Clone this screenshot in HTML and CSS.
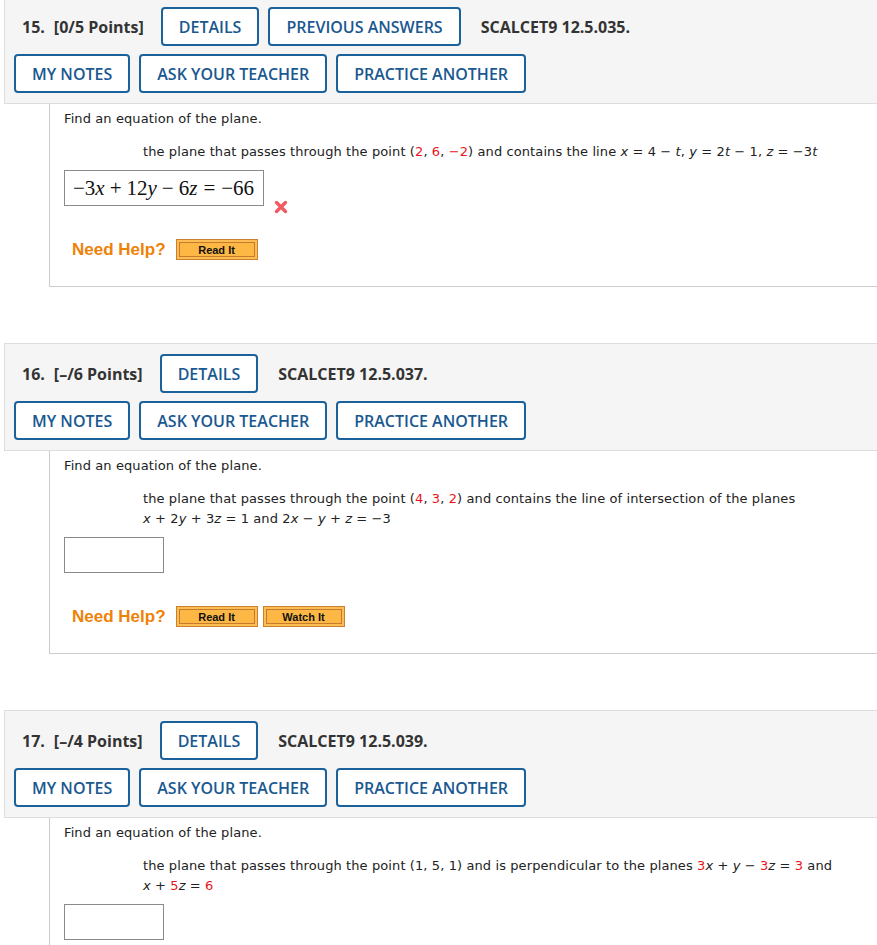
FILE: index.html
```html
<!DOCTYPE html>
<html lang="en">
<head>
<meta charset="utf-8">
<title>Questions</title>
<link rel="stylesheet" href="styles.css">
</head>
<body>
<div class="page">

  <section class="question">
    <div class="qhead">
      <div class="qrow">
        <span class="qlabel"><span class="qnum">15.</span><span class="qpts">[0/5 Points]</span></span>
        <button class="btn">DETAILS</button>
        <button class="btn">PREVIOUS ANSWERS</button>
        <span class="qref">SCALCET9 12.5.035.</span>
      </div>
      <div class="qrow">
        <button class="btn">MY NOTES</button>
        <button class="btn">ASK YOUR TEACHER</button>
        <button class="btn">PRACTICE ANOTHER</button>
      </div>
    </div>
    <div class="qbody">
      <p class="prompt">Find an equation of the plane.</p>
      <p class="stmt">the plane that passes through the point (<span class="red">2</span>, <span class="red">6</span>, <span class="red">&minus;2</span>) and contains the line <i>x</i> = 4 &minus; <i>t</i>, <i>y</i> = 2<i>t</i> &minus; 1, <i>z</i> = &minus;3<i>t</i></p>
      <div class="answer-row">
        <div class="answer wide"><span class="math">&minus;3<i>x</i><span class="op">+</span>12<i>y</i><span class="op">&minus;</span>6<i>z</i><span class="rel">=</span>&minus;66</span></div>
        <svg class="wrong" width="14" height="14" viewBox="0 0 14 14"><path d="M2.5 2.5 L11.5 11.5 M11.5 2.5 L2.5 11.5" stroke="#f25a5f" stroke-width="3.4" stroke-linecap="round" fill="none"/></svg>
      </div>
      <div class="help">
        <span class="help-label">Need Help?</span>
        <button class="help-btn">Read It</button>
      </div>
    </div>
  </section>

  <section class="question">
    <div class="qhead">
      <div class="qrow">
        <span class="qlabel"><span class="qnum">16.</span><span class="qpts">[&ndash;/6 Points]</span></span>
        <button class="btn">DETAILS</button>
        <span class="qref">SCALCET9 12.5.037.</span>
      </div>
      <div class="qrow">
        <button class="btn">MY NOTES</button>
        <button class="btn">ASK YOUR TEACHER</button>
        <button class="btn">PRACTICE ANOTHER</button>
      </div>
    </div>
    <div class="qbody">
      <p class="prompt">Find an equation of the plane.</p>
      <p class="stmt">the plane that passes through the point (<span class="red">4</span>, <span class="red">3</span>, <span class="red">2</span>) and contains the line of intersection of the planes <span class="eq"><i>x</i> + 2<i>y</i> + 3<i>z</i> = 1</span> and <span class="eq">2<i>x</i> &minus; <i>y</i> + <i>z</i> = &minus;3</span></p>
      <div class="answer-row">
        <div class="answer"></div>
      </div>
      <div class="help">
        <span class="help-label">Need Help?</span>
        <button class="help-btn">Read It</button>
        <button class="help-btn">Watch It</button>
      </div>
    </div>
  </section>

  <section class="question">
    <div class="qhead">
      <div class="qrow">
        <span class="qlabel"><span class="qnum">17.</span><span class="qpts">[&ndash;/4 Points]</span></span>
        <button class="btn">DETAILS</button>
        <span class="qref">SCALCET9 12.5.039.</span>
      </div>
      <div class="qrow">
        <button class="btn">MY NOTES</button>
        <button class="btn">ASK YOUR TEACHER</button>
        <button class="btn">PRACTICE ANOTHER</button>
      </div>
    </div>
    <div class="qbody">
      <p class="prompt">Find an equation of the plane.</p>
      <p class="stmt">the plane that passes through the point (1, 5, 1) and is perpendicular to the planes <span class="eq"><span class="red">3</span><i>x</i> + <i>y</i> &minus; <span class="red">3</span><i>z</i> = <span class="red">3</span></span> and <span class="eq"><i>x</i> + <span class="red">5</span><i>z</i> = <span class="red">6</span></span></p>
      <div class="answer-row">
        <div class="answer"></div>
      </div>
    </div>
  </section>

</div>
</body>
</html>
```

FILE: styles.css
```css
html, body {
  margin: 0;
  padding: 0;
  background: #ffffff;
}

body {
  font-family: "DejaVu Sans", Verdana, sans-serif;
  font-size: 13px;
  color: #222222;
  overflow-x: hidden;
}

.page {
  margin-top: -4px;
  padding-left: 4px;
}

.question {
  margin-bottom: 56px;
}

.qhead {
  background: #f5f5f5;
  border: 1px solid #dddddd;
  margin-right: -20px;
  padding: 10px 10px 10px 9px;
  display: flex;
  flex-direction: column;
  gap: 8px;
}

.qrow {
  display: flex;
  align-items: center;
  gap: 9px;
}

.qlabel,
.qref {
  font-family: "Open Sans", "Liberation Sans", sans-serif;
  font-weight: 700;
  font-size: 16px;
  color: #333333;
}

.qlabel {
  margin-left: 8px;
  margin-right: 8px;
}

.qnum {
  margin-right: 9px;
}

.qref {
  margin-left: 11px;
}

.btn {
  box-sizing: border-box;
  height: 39px;
  padding: 0 16px;
  border: 2px solid #1a629c;
  border-radius: 4px;
  background: #ffffff;
  color: #1a5890;
  font-family: "Open Sans", "Liberation Sans", sans-serif;
  font-weight: 600;
  font-size: 16px;
  line-height: 1;
  cursor: pointer;
}

.qbody {
  margin-left: 45px;
  border-left: 1px solid #cccccc;
  border-bottom: 1px solid #cccccc;
  padding: 5px 0 26px 14px;
}

.prompt,
.stmt {
  letter-spacing: 0.1px;
}

.prompt {
  margin: 0;
  line-height: 20px;
}

.stmt {
  margin: 13px 0 0;
  padding-left: 79px;
  line-height: 20px;
}

.red {
  color: #e8141c;
}

.eq {
  white-space: nowrap;
}

.answer-row {
  margin-top: 8px;
  display: flex;
  align-items: flex-end;
}

.answer {
  box-sizing: border-box;
  width: 100px;
  height: 36px;
  border: 1px solid #8a8a8a;
  background: #ffffff;
}

.answer.wide {
  width: 200px;
  padding: 0 0 0 8px;
  display: flex;
  align-items: center;
}

.math {
  font-family: "Liberation Serif", "Times New Roman", serif;
  font-size: 21px;
  color: #111111;
  white-space: nowrap;
}

.math .op {
  margin: 0 5px;
}

.math .rel {
  margin: 0 6px;
}

.wrong {
  margin: 0 0 -8px 10px;
}

.help {
  margin-top: 33px;
  padding-left: 8px;
  display: flex;
  align-items: center;
}

.help-label {
  font-family: "Liberation Sans", Arial, sans-serif;
  font-weight: 700;
  font-size: 17px;
  color: #ee8208;
  margin-right: 10px;
}

.help-btn {
  box-sizing: border-box;
  width: 82px;
  height: 21px;
  margin-right: 5px;
  padding: 0;
  border: 1px solid #c98131;
  background: #fdb745;
  box-shadow: inset 0 0 0 2px #fdbd52, inset 0 0 0 3px #c47c2c;
  font-family: "Liberation Sans", Arial, sans-serif;
  font-weight: 700;
  font-size: 11px;
  color: #111111;
  cursor: pointer;
}
```
